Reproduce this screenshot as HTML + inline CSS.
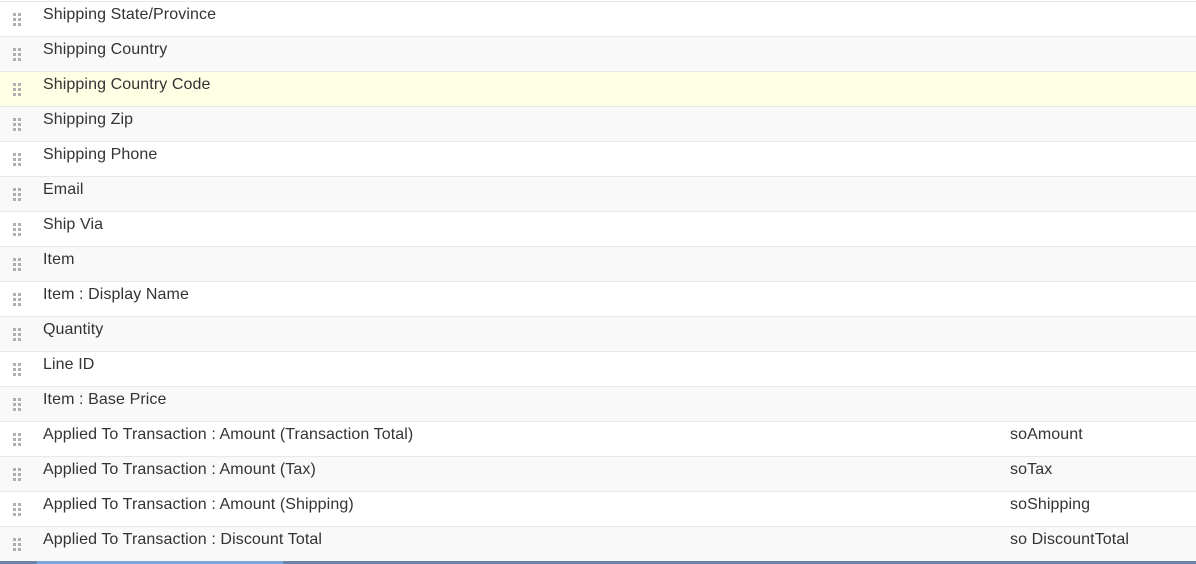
<!DOCTYPE html>
<html><head><style>
html,body{margin:0;padding:0;width:1196px;height:564px;overflow:hidden;background:#fff;font-family:"Liberation Sans",Arial,sans-serif;}
.wrap{position:absolute;top:1px;left:0;width:1196px;}
.row{position:relative;height:34px;border-top:1px solid #e8e8e8;font-size:16px;color:#333;}
.row:nth-child(odd){background:#fff;}
.row:nth-child(even){background:#f9f9f9;}
.row.hl{background:#ffffe6;}
.row .t{position:absolute;left:43px;top:3px;line-height:20px;letter-spacing:0.1px;}
.row .v{position:absolute;left:1010px;top:3px;line-height:20px;letter-spacing:0.1px;}
.row .d{position:absolute;left:13px;top:11px;width:3px;height:3px;background:#b0b0b0;
box-shadow:5px 0 #b0b0b0,0 5px #b0b0b0,5px 5px #b0b0b0,0 10px #b0b0b0,5px 10px #b0b0b0;}
.bot{position:absolute;left:0;top:561px;width:1196px;height:3px;background:#6a84a8;}
.bot2{position:absolute;left:37px;top:561px;width:246px;height:3px;background:#7ea6dc;}
</style></head><body>
<div class="wrap">
<div class="row"><span class="d"></span><span class="t">Shipping State/Province</span></div>
<div class="row"><span class="d"></span><span class="t">Shipping Country</span></div>
<div class="row hl"><span class="d"></span><span class="t">Shipping Country Code</span></div>
<div class="row"><span class="d"></span><span class="t">Shipping Zip</span></div>
<div class="row"><span class="d"></span><span class="t">Shipping Phone</span></div>
<div class="row"><span class="d"></span><span class="t">Email</span></div>
<div class="row"><span class="d"></span><span class="t">Ship Via</span></div>
<div class="row"><span class="d"></span><span class="t">Item</span></div>
<div class="row"><span class="d"></span><span class="t">Item : Display Name</span></div>
<div class="row"><span class="d"></span><span class="t">Quantity</span></div>
<div class="row"><span class="d"></span><span class="t">Line ID</span></div>
<div class="row"><span class="d"></span><span class="t">Item : Base Price</span></div>
<div class="row"><span class="d"></span><span class="t">Applied To Transaction : Amount (Transaction Total)</span><span class="v">soAmount</span></div>
<div class="row"><span class="d"></span><span class="t">Applied To Transaction : Amount (Tax)</span><span class="v">soTax</span></div>
<div class="row"><span class="d"></span><span class="t">Applied To Transaction : Amount (Shipping)</span><span class="v">soShipping</span></div>
<div class="row"><span class="d"></span><span class="t">Applied To Transaction : Discount Total</span><span class="v">so DiscountTotal</span></div>
</div>
<div class="bot"></div><div class="bot2"></div>
</body></html>
